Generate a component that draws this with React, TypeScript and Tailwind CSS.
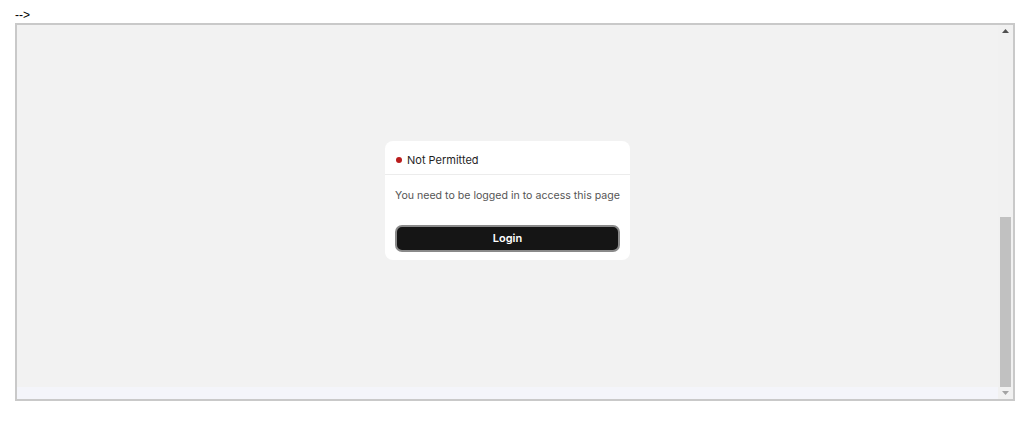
import React from "react";

export default function App() {
  return (
    <div className="h-[426px] w-[1024px] bg-white px-[15px] font-['Liberation_Sans',sans-serif]">
      <div className="h-[23px] pt-[9px] text-[12px] leading-[12px] text-black">--&gt;</div>

      {/* iframe frame */}
      <div className="flex h-[378px] w-[1000px] border-2 border-[#c9c9c9]">
        <div className="flex flex-1 flex-col bg-[#f2f2f2]">
          <div className="flex flex-1 justify-center pt-[116px] font-['Inter',sans-serif]">
            <div className="h-[119px] w-[245px] rounded-lg bg-white">
              <div className="flex h-[34px] items-center gap-[5px] border-b border-[#ececec] px-[11px] pt-[5px]">
                <span className="h-[6px] w-[6px] rounded-full bg-[#b91c1c]" />
                <span className="text-[11px] text-[#1f1f1f]">Not Permitted</span>
              </div>
              <div className="px-[10px] pt-[14px]">
                <p className="whitespace-nowrap text-[10.6px] leading-[14px] text-[#555555]">
                  You need to be logged in to access this page
                </p>
                <button className="mt-[22px] flex h-[27px] w-full items-center justify-center rounded-[7px] border-2 border-[#8a8a8a] bg-[#151515] text-[11px] font-semibold text-white">
                  Login
                </button>
              </div>
            </div>
          </div>
          <div className="h-[12px] bg-[#f4f5fa]" />
        </div>

        {/* scrollbar */}
        <div className="flex w-[15px] flex-col bg-[#f1f1f1] px-[2px]">
          <div className="flex h-[12px] items-center justify-center">
            <svg width="7" height="4" viewBox="0 0 7 4"><path d="M3.5 0L7 4H0z" fill="#505050" /></svg>
          </div>
          <div className="mt-[180px] flex-1 bg-[#c1c1c1]" />
          <div className="flex h-[12px] items-center justify-center">
            <svg width="7" height="4" viewBox="0 0 7 4"><path d="M0 0h7L3.5 4z" fill="#a3a3a3" /></svg>
          </div>
        </div>
      </div>
    </div>
  );
}
